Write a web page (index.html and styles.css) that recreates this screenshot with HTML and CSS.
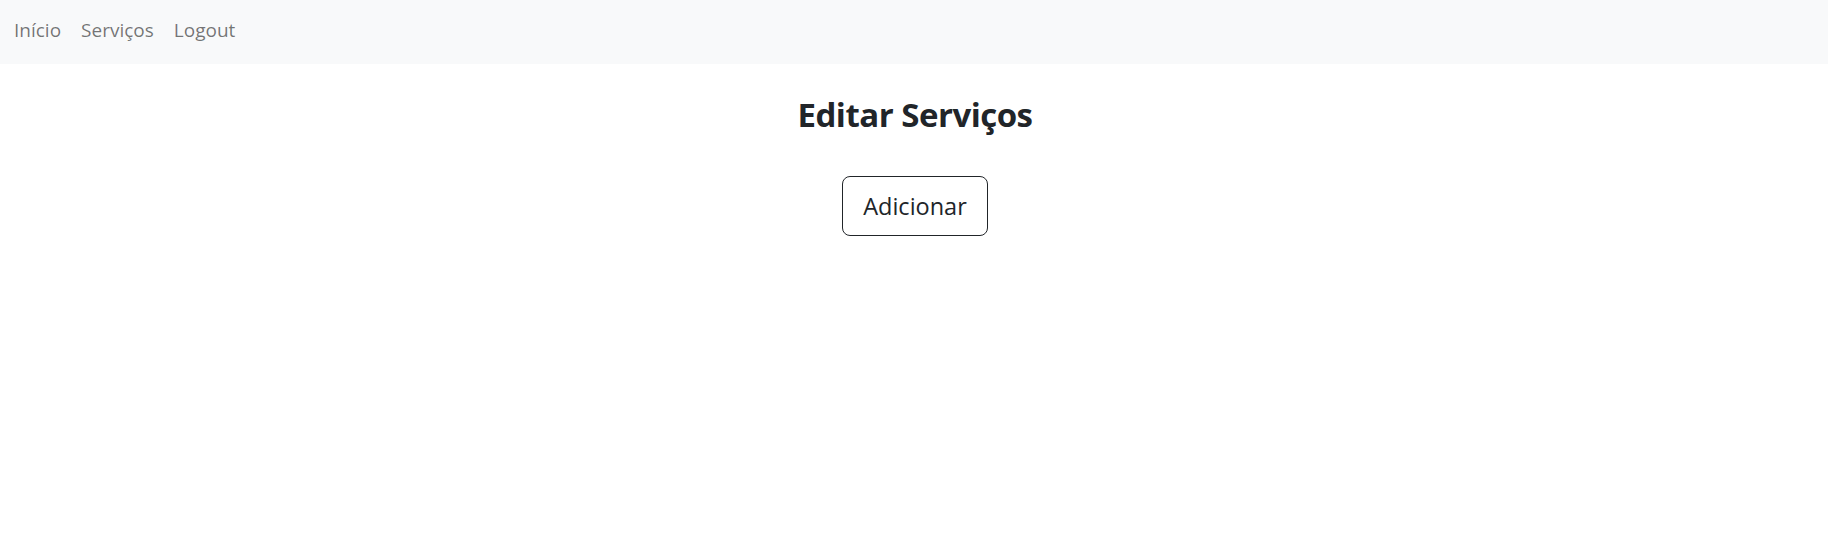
FILE: index.html
```html
<!DOCTYPE html>
<html lang="pt-BR">
<head>
<meta charset="utf-8">
<title>Editar Serviços</title>
<link rel="stylesheet" href="styles.css">
</head>
<body>
<nav class="navbar">
  <a class="nav-link" href="#">Início</a>
  <a class="nav-link" href="#">Serviços</a>
  <a class="nav-link" href="#">Logout</a>
</nav>
<main class="content">
  <h3 class="title">Editar Serviços</h3>
  <button class="btn-add" type="button">Adicionar</button>
</main>
</body>
</html>
```

FILE: styles.css
```css
* { box-sizing: border-box; }
html, body {
  margin: 0;
  padding: 0;
  background: #ffffff;
  font-family: "Open Sans", "Noto Sans", sans-serif;
  color: #212529;
}
.navbar {
  display: flex;
  align-items: flex-start;
  background: #f8f9fa;
  height: 64px;
  padding: 15px 0 0 14px;
}
.nav-link {
  font-size: 19px;
  line-height: 30px;
  color: rgba(0, 0, 0, 0.55);
  text-decoration: none;
  padding: 0 10px 0 0;
  margin-right: 10px;
}
.content {
  display: flex;
  flex-direction: column;
  align-items: center;
}
.title {
  margin: 31px 0 0 2px;
  font-size: 33px;
  font-weight: 700;
  line-height: 1.2;
  letter-spacing: -0.5px;
  color: #212529;
}
.btn-add {
  margin-top: 41px;
  margin-left: 2px;
  font-family: "Open Sans", "Noto Sans", sans-serif;
  font-size: 23.5px;
  line-height: 36px;
  padding: 11px 20px 11px;
  background: transparent;
  color: #212529;
  border: 1px solid #212529;
  border-radius: 8px;
}
```
